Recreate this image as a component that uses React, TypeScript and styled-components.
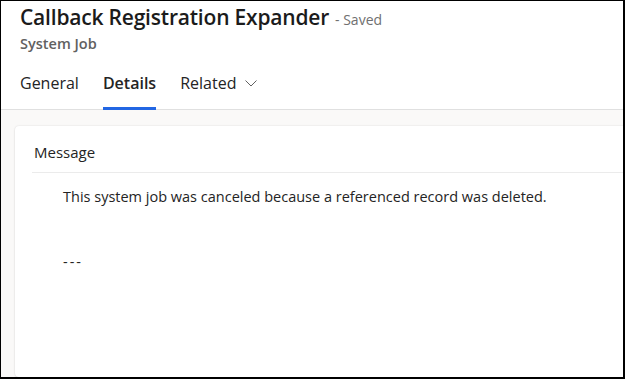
import React from 'react'
import styled, { createGlobalStyle } from 'styled-components'

const GlobalStyle = createGlobalStyle`
    html, body {
        margin: 0;
        padding: 0;
        background: #fff;
    }
    body {
        font-family: "Open Sans", "Noto Sans", sans-serif;
        color: #242424;
    }
`

const tabs = [
    { label: 'General', active: false },
    { label: 'Details', active: true },
    { label: 'Related', active: false, menu: true },
]

export default function App() {
    return (
        <>
            <GlobalStyle />
            <Frame>
                <Header>
                    <TitleRow>
                        <Title>Callback Registration Expander</Title>
                        <SaveState>- Saved</SaveState>
                    </TitleRow>
                    <EntityName>System Job</EntityName>
                    <TabList>
                        {tabs.map((tab) => (
                            <Tab key={tab.label} $active={tab.active}>
                                {tab.label}
                                {tab.menu && (
                                    <Chevron viewBox="0 0 12 7" aria-hidden="true">
                                        <path d="M0.5 0.5 L6 6 L11.5 0.5" />
                                    </Chevron>
                                )}
                            </Tab>
                        ))}
                    </TabList>
                </Header>
                <Workspace>
                    <Card>
                        <SectionHead>Message</SectionHead>
                        <SectionBody>
                            <MessageText>This system job was canceled because a referenced record was deleted.</MessageText>
                            <MessageText $spaced>---</MessageText>
                        </SectionBody>
                    </Card>
                </Workspace>
            </Frame>
        </>
    )
}

const Frame = styled.div`
    box-sizing: border-box;
    width: 625px;
    height: 379px;
    border-style: solid;
    border-color: #000;
    border-width: 1px 2px 2px 1px;
    display: flex;
    flex-direction: column;
    overflow: hidden;
`

const Header = styled.header`
    background: #fff;
    padding: 0 19px;
    border-bottom: 1px solid #e0e0e0;
`

const TitleRow = styled.div`
    display: flex;
    align-items: baseline;
    gap: 6px;
    padding-top: 2px;
    height: 31px;
`

const Title = styled.h1`
    margin: 0;
    font-size: 21px;
    font-weight: 600;
    color: #1b1b1b;
    letter-spacing: -0.2px;
`

const SaveState = styled.span`
    font-size: 14px;
    color: #707070;
`

const EntityName = styled.div`
    font-size: 14.5px;
    font-weight: 600;
    color: #616161;
    line-height: 20px;
`

const TabList = styled.nav`
    display: flex;
    gap: 24px;
    margin-top: 14px;
`

const Tab = styled.div<{ $active: boolean }>`
    display: flex;
    align-items: center;
    gap: 9px;
    height: 42px;
    box-sizing: border-box;
    padding-bottom: 9px;
    font-size: 16px;
    font-weight: ${(p) => (p.$active ? 600 : 400)};
    color: #242424;
    border-bottom: 3px solid ${(p) => (p.$active ? '#2266e3' : 'transparent')};
    margin-bottom: -1px;
`

const Chevron = styled.svg`
    width: 12px;
    height: 7px;
    fill: none;
    stroke: #616161;
    stroke-width: 1;
`

const Workspace = styled.main`
    flex: 1;
    background: #faf9f8;
    padding: 16px 0 0 14px;
    display: flex;
`

const Card = styled.section`
    flex: 1;
    margin-right: -12px;
    background: #fff;
    border-radius: 4px;
    box-shadow: 0 0 2px rgba(0, 0, 0, 0.12), 0 1px 2px rgba(0, 0, 0, 0.08);
    padding: 0 0 0 17px;
`

const SectionHead = styled.h2`
    margin: 0;
    font-size: 15px;
    font-weight: 400;
    color: #242424;
    line-height: 20px;
    padding: 16px 0 10px 2px;
    border-bottom: 1px solid #ebebeb;
`

const SectionBody = styled.div`
    padding: 14px 0 0 31px;
    display: flex;
    flex-direction: column;
    gap: 45px;
`

const MessageText = styled.p<{ $spaced?: boolean }>`
    margin: 0;
    font-size: 14.5px;
    line-height: 20px;
    color: #242424;
    letter-spacing: ${(p) => (p.$spaced ? '2px' : 'normal')};
`
